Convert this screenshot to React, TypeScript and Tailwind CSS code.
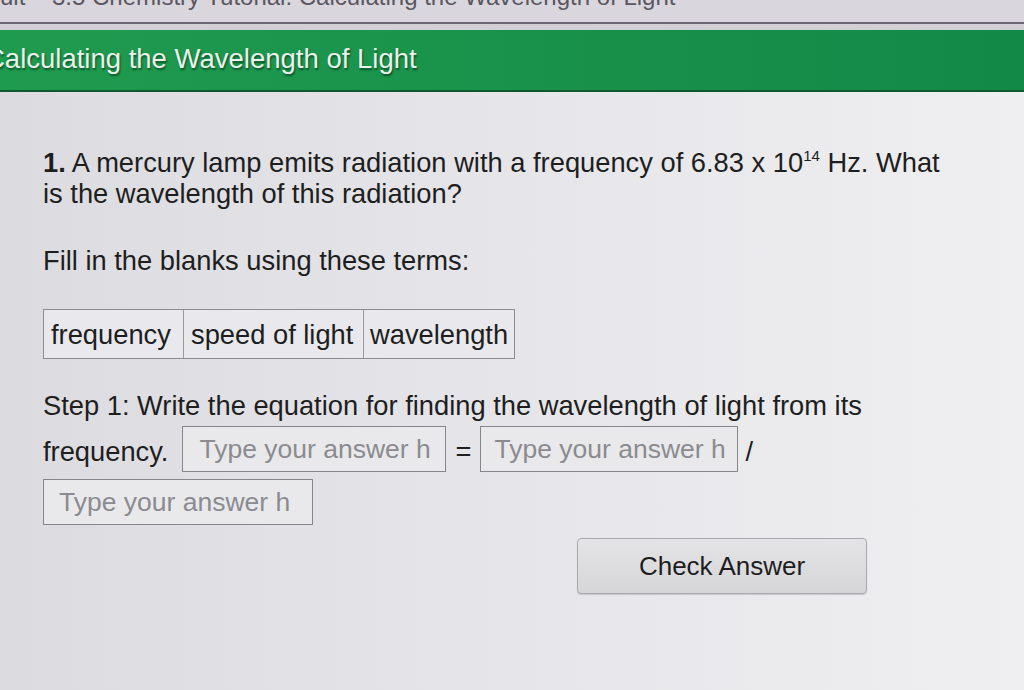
export default function App() {
  return (
    <div
      className="w-[1024px] h-[690px] overflow-hidden bg-linear-to-r from-[#dcdbe0] via-[#e6e6ea] to-[#efeff1] text-[#1e1e1e]"
      style={{ fontFamily: '"Liberation Sans", Arial, sans-serif' }}
    >
      {/* cut-off browser title */}
      <div className="h-[22px] overflow-hidden bg-[#dad6de]">
        <div className="-mt-[15px] flex text-[24px] leading-[24px] text-[#5a5760] whitespace-nowrap">
          <span className="w-[52px]">ult</span>
          <span>3.5 Chemistry Tutorial: Calculating the Wavelength of Light</span>
        </div>
      </div>
      <div className="h-[2px] bg-[#6c6672]" />
      <div className="h-[6px] bg-[#d3cfd7]" />

      {/* green header */}
      <div className="h-[62px] flex items-center pb-[3px] overflow-hidden bg-linear-to-r from-[#1f9b4f] to-[#138947] border-b-2 border-[#0e5a30]">
        <h1
          className="-ml-[15px] text-[27.5px] text-[#e9f1ea] whitespace-nowrap"
          style={{ textShadow: "1px 2px 2px rgba(0,0,0,0.45)" }}
        >
          Calculating the Wavelength of Light
        </h1>
      </div>

      <div className="pl-[43px] pt-[55px]">
        <p className="text-[27.3px] leading-[31px] w-[905px]">
          <span className="font-bold">1.</span> A mercury lamp emits radiation with a frequency of 6.83 x 10
          <sup className="text-[15px] -top-[11px]">14</sup> Hz. What is the wavelength of this radiation?
        </p>

        <p className="mt-[36px] text-[27.3px] leading-[31px]">Fill in the blanks using these terms:</p>

        <div className="mt-[33px] flex w-[472px] border border-[#8c8c90] bg-[#e9e9ed] text-[27.3px] leading-[31px]">
          <div className="w-[140px] pl-[7px] pt-[9px] pb-[8px] border-r border-[#9a9a9e]">frequency</div>
          <div className="w-[180px] pl-[7px] pt-[9px] pb-[8px] border-r border-[#9a9a9e]">speed of light</div>
          <div className="flex-1 pl-[6px] pt-[9px] pb-[8px]">wavelength</div>
        </div>

        <p className="mt-[31px] text-[27.3px] leading-[31px]">
          Step 1: Write the equation for finding the wavelength of light from its
        </p>

        <div className="mt-[5px] flex items-center text-[27.3px] leading-[31px]">
          <span className="pt-[4px]">frequency.</span>
          <input
            className="ml-[14px] w-[264px] h-[46px] pl-[16px] pr-[15px] border-[1.5px] border-[#86868a] bg-[#e9e9ec] text-[26.5px] outline-none placeholder:text-[#8b8b8f]"
            placeholder="Type your answer here"
          />
          <span className="ml-[9px] w-[25px] pt-[4px]">=</span>
          <input
            className="w-[258px] h-[46px] pl-[13px] pr-[12px] border-[1.5px] border-[#86868a] bg-[#e9e9ec] text-[26.5px] outline-none placeholder:text-[#8b8b8f]"
            placeholder="Type your answer here"
          />
          <span className="ml-[7px] pt-[4px]">/</span>
        </div>

        <input
          className="mt-[7px] block w-[270px] h-[46px] pl-[15px] pr-[23px] border-[1.5px] border-[#86868a] bg-[#e9e9ec] text-[26.5px] outline-none placeholder:text-[#8b8b8f]"
          placeholder="Type your answer here"
        />

        <button className="mt-[13px] ml-[534px] block w-[290px] h-[56px] rounded-[4px] border border-[#a9a9ad] bg-linear-to-b from-[#e4e4e7] to-[#d6d6d9] text-[26px] text-[#1e1e1e] shadow-[0_1px_1px_rgba(0,0,0,0.15)]">
          Check Answer
        </button>
      </div>
    </div>
  );
}
